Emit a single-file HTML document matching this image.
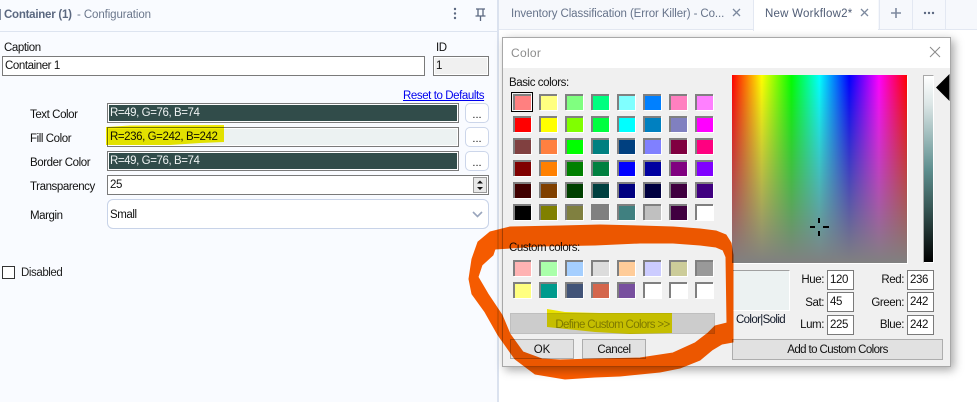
<!DOCTYPE html>
<html><head><meta charset="utf-8"><style>
html,body{margin:0;padding:0}
body{width:977px;height:402px;overflow:hidden;position:relative;background:#fff;font-family:"Liberation Sans",sans-serif;font-size:11.5px;letter-spacing:-.42px;color:#111}
.a{position:absolute;white-space:nowrap;line-height:14px}
.box{position:absolute;box-sizing:border-box}
.inp{position:absolute;box-sizing:border-box;border:1px solid #7a7a7a;background:#fff;padding-left:2px;line-height:19px}
.clr{position:absolute;box-sizing:border-box;left:107px;width:352px;height:20px;border:1px solid #7a7a7a;box-shadow:inset 0 0 0 1px #fff;padding-left:2px;line-height:18px}
.dots{position:absolute;box-sizing:border-box;left:465px;width:24px;height:20px;border:1px solid #ccd6ea;border-radius:5px;background:#fff;text-align:center;line-height:23px;font-size:11px;letter-spacing:0;color:#111}
.grid{position:absolute;display:grid;grid-template-columns:repeat(8,18px);column-gap:8px}
.grid i{display:block;box-sizing:border-box;width:18px;height:16px;border-top:2px solid #808080;border-left:2px solid #808080;box-shadow:1px 1px 0 #fff}
.btn{position:absolute;box-sizing:border-box;background:#e1e1e1;border:1px solid #adadad;text-align:center;line-height:20px;color:#111}
.lab{position:absolute;text-align:right;white-space:nowrap;line-height:14px}
.num{position:absolute;box-sizing:border-box;width:27px;height:20px;border:1px solid #7a7a7a;background:#fff;padding-left:2px;line-height:18px}
svg{position:absolute;left:0;top:0}
</style></head><body>

<!-- left panel -->
<div class="box" style="left:0;top:0;width:497px;height:402px;background:#f9fbff"></div>
<div class="box" style="left:0;top:31px;width:497px;height:1px;background:#dde4f0"></div>
<div class="box" style="left:497px;top:0;width:2px;height:402px;background:#dbe2ef"></div>
<div class="box" style="left:0;top:9px;width:1px;height:11px;background:#7f8ba0"></div>
<div class="a" style="left:4px;top:8px;font-weight:bold;color:#5b6880;letter-spacing:-.25px">Container (1)</div>
<div class="a" style="left:77px;top:8px;color:#6b778c;letter-spacing:-.1px">- Configuration</div>
<svg width="500" height="32" style="left:0;top:0">
<circle cx="455" cy="9" r="1.2" fill="#5b6880"/><circle cx="455" cy="13.5" r="1.2" fill="#5b6880"/><circle cx="455" cy="18" r="1.2" fill="#5b6880"/>
<path d="M476 9h9M478 9v7h5V9M475.5 16h10M480.5 16v5" fill="none" stroke="#5b6880" stroke-width="1.3"/>
</svg>

<div class="a" style="left:4px;top:41px">Caption</div>
<div class="a" style="left:436px;top:41px">ID</div>
<div class="inp" style="left:2px;top:56px;width:423px;height:20px">Container 1</div>
<div class="inp" style="left:433px;top:56px;width:56px;height:20px;background:#f0f0f0;box-shadow:inset 0 0 0 1px #fff">1</div>
<div class="a" style="left:403px;top:89px;color:#0000ee;text-decoration:underline">Reset to Defaults</div>

<div class="a" style="left:30px;top:108px">Text Color</div>
<div class="clr" style="top:103px;background:#314c4a;color:#eef2f2">R=49, G=76, B=74</div>
<div class="dots" style="top:103px">...</div>
<div class="a" style="left:30px;top:132px">Fill Color</div>
<div class="clr" style="top:127px;background:#ecf2f2">R=236, G=242, B=242</div>
<div class="dots" style="top:127px">...</div>
<div class="a" style="left:30px;top:156px">Border Color</div>
<div class="clr" style="top:151px;background:#314c4a;color:#eef2f2">R=49, G=76, B=74</div>
<div class="dots" style="top:151px">...</div>
<div class="a" style="left:30px;top:180px">Transparency</div>
<div class="inp" style="left:107px;top:175px;width:382px;height:20px">25</div>
<div class="box" style="left:473px;top:177px;width:14px;height:16px;background:#e8e8e8;border:1px solid #9a9a9a"></div>
<svg width="977" height="402"><path d="M477 183.500l3-3 3 3zM477 187l3 3 3-3z" fill="#111"/></svg>
<div class="a" style="left:30px;top:209px">Margin</div>
<div class="box" style="left:107px;top:199px;width:382px;height:30px;background:#fff;border:1px solid #c8d3e8;border-radius:6px;padding:8px 0 0 2px;line-height:15px">Small</div>
<svg width="977" height="402"><path d="M473 212l4.500 4.500 4.500-4.500" fill="none" stroke="#9aa6bd" stroke-width="1.600"/></svg>
<div class="box" style="left:2px;top:266px;width:13px;height:13px;border:1px solid #333;background:#fff"></div>
<div class="a" style="left:21px;top:266px;color:#222">Disabled</div>

<!-- tab bar -->
<div class="box" style="left:499px;top:0;width:478px;height:30px;background:#f6f8fc;border-bottom:1px solid #e3e8f2"></div>
<div class="box" style="left:753px;top:0;width:125px;height:31px;background:#fff;border-left:1px solid #e3e8f2"></div>
<div class="box" style="left:879px;top:0;width:1px;height:30px;background:#e3e8f2"></div>
<div class="box" style="left:912px;top:0;width:1px;height:30px;background:#e3e8f2"></div>
<div class="box" style="left:945px;top:0;width:1px;height:30px;background:#e3e8f2"></div>
<div class="a" style="left:511px;top:7px;color:#66738a;letter-spacing:-.1px">Inventory Classification (Error Killer) - Co...</div>
<div class="a" style="left:765px;top:7px;color:#4f5c75;letter-spacing:.24px">New Workflow2*</div>
<svg width="977" height="32">
<path d="M733 9l7 7M740 9l-7 7M861 9l7 7M868 9l-7 7" stroke="#7d899e" stroke-width="1.300" fill="none"/>
<path d="M891 13h10M896 8v10" stroke="#7d899e" stroke-width="1.600" fill="none"/>
<circle cx="925" cy="13" r="1.200" fill="#5b6880"/><circle cx="929" cy="13" r="1.200" fill="#5b6880"/><circle cx="933" cy="13" r="1.200" fill="#5b6880"/>
</svg>

<!-- dialog -->
<div class="box" style="left:502px;top:37px;width:449px;height:330px;background:#f0f0f0;border:1px solid #a8a8a8;box-shadow:3px 3px 9px rgba(0,0,0,.35)"></div>
<div class="box" style="left:503px;top:38px;width:447px;height:30px;background:#fff"></div>
<div class="a" style="left:511px;top:46px;color:#8c8c8c;font-size:12px;letter-spacing:.3px">Color</div>
<svg width="977" height="402"><path d="M930 47l10 10M940 47l-10 10" stroke="#8a8a8a" stroke-width="1"/></svg>
<div class="a" style="left:509px;top:76px">Basic colors:</div>

<div class="grid" style="left:513px;top:94px;grid-template-rows:repeat(6,16px);row-gap:6px">
<i style="background:#ff8080;outline:1px solid #000;outline-offset:1px"></i><i style="background:#ffff80"></i><i style="background:#80ff80"></i><i style="background:#00ff80"></i><i style="background:#80ffff"></i><i style="background:#0080ff"></i><i style="background:#ff80c0"></i><i style="background:#ff80ff"></i>
<i style="background:#ff0000"></i><i style="background:#ffff00"></i><i style="background:#80ff00"></i><i style="background:#00ff40"></i><i style="background:#00ffff"></i><i style="background:#0080c0"></i><i style="background:#8080c0"></i><i style="background:#ff00ff"></i>
<i style="background:#804040"></i><i style="background:#ff8040"></i><i style="background:#00ff00"></i><i style="background:#008080"></i><i style="background:#004080"></i><i style="background:#8080ff"></i><i style="background:#800040"></i><i style="background:#ff0080"></i>
<i style="background:#800000"></i><i style="background:#ff8000"></i><i style="background:#008000"></i><i style="background:#008040"></i><i style="background:#0000ff"></i><i style="background:#0000a0"></i><i style="background:#800080"></i><i style="background:#8000ff"></i>
<i style="background:#400000"></i><i style="background:#804000"></i><i style="background:#004000"></i><i style="background:#004040"></i><i style="background:#000080"></i><i style="background:#000040"></i><i style="background:#400040"></i><i style="background:#400080"></i>
<i style="background:#000"></i><i style="background:#808000"></i><i style="background:#808040"></i><i style="background:#808080"></i><i style="background:#408080"></i><i style="background:#c0c0c0"></i><i style="background:#400040"></i><i style="background:#fff"></i>
</div>

<div class="a" style="left:509px;top:241px">Custom colors:</div>
<div class="grid" style="left:513px;top:260px;grid-template-rows:repeat(2,16px);row-gap:6px">
<i style="background:#ffb3b3"></i><i style="background:#aaffaa"></i><i style="background:#a5cfff"></i><i style="background:#dcdcdc"></i><i style="background:#ffcc99"></i><i style="background:#ccccff"></i><i style="background:#cccc99"></i><i style="background:#999"></i>
<i style="background:#ffff80"></i><i style="background:#009b8d"></i><i style="background:#425478"></i><i style="background:#d4664c"></i><i style="background:#78509f"></i><i style="background:#fff"></i><i style="background:#fff"></i><i style="background:#fff"></i>
</div>

<div class="btn" style="left:510px;top:313px;width:205px;height:21px;background:#cccccc;border-color:#bfbfbf;color:#838383;line-height:22px;letter-spacing:-.65px">Define Custom Colors &gt;&gt;</div>
<div class="btn" style="left:510px;top:339px;width:64px;height:20px;letter-spacing:0">OK</div>
<div class="btn" style="left:582px;top:339px;width:64px;height:20px">Cancel</div>

<!-- spectrum -->
<div class="box" style="left:732px;top:75px;width:175px;height:188px;background:linear-gradient(to bottom,rgba(128,128,128,0),#808080),linear-gradient(to right,#f00 0%,#ff0 17%,#0f0 34%,#0ff 50%,#00f 67%,#f0f 84%,#f00 100%);box-shadow:1px 1px 0 #fff"></div>
<svg width="977" height="402"><path d="M819 218v5M819 231v5M810 227h5M823 227h6" stroke="#000" stroke-width="2" fill="none"/></svg>
<div class="box" style="left:923px;top:75px;width:11px;height:188px;background:linear-gradient(to bottom,#fff 0%,#dce6e6 15%,#5f9090 50%,#3a5a58 70%,#000 100%);border:1px solid #a8a8a8;border-right-color:#fff;border-bottom-color:#fff"></div>
<svg width="977" height="402"><path d="M936 87.500L949.500 74V101z" fill="#000"/></svg>

<div class="box" style="left:733px;top:270px;width:57px;height:41px;background:#ecf2f2;border-top:1px solid #a0a0a0;border-right:1px solid #fff;border-bottom:1px solid #fff"></div>
<div class="a" style="left:736px;top:313px;color:#101828;letter-spacing:-.64px">Color|Solid</div>

<div class="lab" style="right:153px;top:273px">Hue:</div>
<div class="num" style="left:827px;top:270px">120</div>
<div class="lab" style="right:153px;top:296px">Sat:</div>
<div class="num" style="left:827px;top:292px">45</div>
<div class="lab" style="right:153px;top:318px">Lum:</div>
<div class="num" style="left:827px;top:315px">225</div>
<div class="lab" style="right:73px;top:273px">Red:</div>
<div class="num" style="left:907px;top:270px">236</div>
<div class="lab" style="right:73px;top:296px">Green:</div>
<div class="num" style="left:907px;top:292px">242</div>
<div class="lab" style="right:73px;top:318px">Blue:</div>
<div class="num" style="left:907px;top:315px">242</div>
<div class="btn" style="left:732px;top:339px;width:211px;height:21px;line-height:21px;letter-spacing:-.6px">Add to Custom Colors</div>

<!-- highlights -->
<svg width="977" height="402" style="mix-blend-mode:multiply">
<path d="M106 127L130 125.500L224 125V142L200 143L170 145L106 145z" fill="#f5ee00"/>
<path d="M547 309L565 312L600 313L672 313V333L630 334L595 332L547 327z" fill="#f7ee00"/>
<path fill="#fb5c00" fill-rule="evenodd" stroke="#fb5c00" stroke-width="1" stroke-linejoin="round" d="
M490 232 L498 230 L510 227 L560 226 L600 225 L640 226 L673 227 L700 229 L716 231 L726 235 L731 243 L733 255 L733 342 L722 344 L712 350 L700 360 L680 368 L660 372 L620 376 L595 377 L565 379 L535 374 L515 359 L498 335 L485 312 L472 294 L469 279 L472 259 L478 242 Z
M495 249 L540 246 L595 245 L640 243 L673 243 L700 245 L716 247 L723 250 L726 257 L727 323 L715 326 L708 333 L695 343 L673 353 L640 358 L595 359 L560 360 L542 359 L523 352 L510 334 L502 315 L488 294 L478 277 L482 265 L493 255 Z"/>
</svg>
</body></html>
